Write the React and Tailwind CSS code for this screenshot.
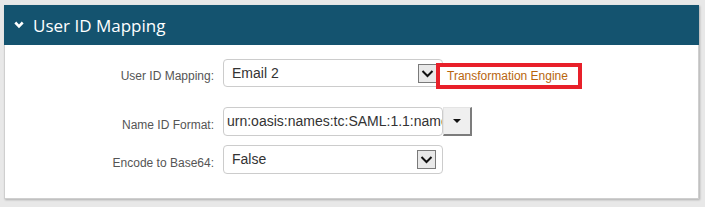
import { useState } from 'react'

function ChevronBox() {
  return (
    <span className="w-[19px] h-[19px] border border-[#7a7a7a] bg-[#e9e9e9] flex items-center justify-center">
      <svg width="13" height="9" viewBox="0 0 13 9">
        <polyline points="1.5,2 6.5,7 11.5,2" fill="none" stroke="#111" strokeWidth="2" />
      </svg>
    </span>
  )
}

function Row({ label, className, children }) {
  return (
    <div className={`flex items-center ${className}`}>
      <div className="w-[214px] pr-[9px] pt-[6px] text-right text-[12px] text-[#555]">{label}</div>
      {children}
    </div>
  )
}

export default function App() {
  const [mapping] = useState('Email 2')

  return (
    <div className="w-[705px] h-[207px] bg-[#e8e8e8] pt-[5px] pl-[4px] font-['Liberation_Sans',Arial,sans-serif]">
      <div className="w-[695px] shadow-[1px_1px_2px_rgba(0,0,0,0.25)]">
        {/* Header */}
        <div className="h-[40px] bg-[#14536f] flex items-center pl-[10px] gap-[9px] text-white">
          <svg width="10" height="8" viewBox="0 0 10 8">
            <polyline points="1.3,1.5 5,5.3 8.7,1.5" fill="none" stroke="#fff" strokeWidth="2.6" />
          </svg>
          <span className="text-[17px] font-['Open_Sans',sans-serif] leading-none">User ID Mapping</span>
        </div>

        {/* Body */}
        <div className="h-[154px] bg-white border-l border-b border-r border-[#cfcfcf] pt-[12px] pl-[4px]">
          <Row label="User ID Mapping:">
            <div className="w-[220px] h-[28px] border border-[#ccc] rounded-[4px] flex items-center justify-between pl-[8px] pr-[5px] text-[14px] text-[#333]">
              <span>{mapping}</span>
              <ChevronBox />
            </div>
            <div className="ml-[-7px] mt-[6px] w-[146px] h-[26px] border-4 border-[#e8202a] bg-white flex items-center pl-[7px] text-[12px] text-[#b8650e]">
              Transformation Engine
            </div>
          </Row>

          <Row label="Name ID Format:" className="mt-[18px]">
            <div className="w-[220px] h-[29px] border border-[#ccc] rounded-[4px] flex items-center pl-[3px] overflow-hidden text-[14px] text-[#333] whitespace-nowrap">
              urn:oasis:names:tc:SAML:1.1:nameid-format:unspecified
            </div>
            <div className="w-[29px] h-[29px] bg-[#efefef] border-t border-l border-[#e4e4e4] border-r-[2px] border-b-[2px] border-r-[#7c7c7c] border-b-[#7c7c7c] flex items-center justify-center">
              <svg width="8" height="4" viewBox="0 0 8 4">
                <polygon points="0,0 8,0 4,4" fill="#111" />
              </svg>
            </div>
          </Row>

          <Row label="Encode to Base64:" className="mt-[9px]">
            <div className="w-[220px] h-[29px] border border-[#ccc] rounded-[4px] flex items-center justify-between pl-[8px] pr-[6px] text-[14px] text-[#333]">
              <span>False</span>
              <ChevronBox />
            </div>
          </Row>
        </div>
      </div>
    </div>
  )
}
